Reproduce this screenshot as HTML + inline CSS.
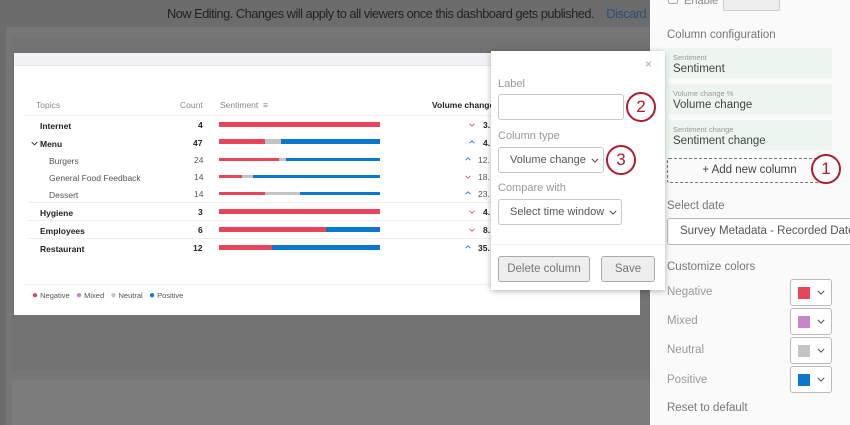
<!DOCTYPE html>
<html><head><style>
*{box-sizing:border-box;margin:0;padding:0}
body{width:850px;height:425px;overflow:hidden;background:#767676;font-family:"Liberation Sans",sans-serif;position:relative}
.abs{position:absolute}
.banner{left:6px;top:0;width:660px;height:27px;background:#6c6c6c;color:#222;font-size:12.8px;letter-spacing:-0.5px;line-height:27px;padding-left:161px;white-space:nowrap;overflow:hidden}
.banner span{color:#2d4f7a}
.card{left:14px;top:53px;width:626px;height:262px;background:#fff}
.card .hd{height:13px;background:#f2f2f6;border-bottom:1px solid #e6e6ea}
.th{font-size:8.5px;color:#888;top:100px}
.row{font-size:8.5px;color:#222}
.bar{height:5px;display:flex}
.bar.thin{height:3px}
.r{background:#e8455a}.g{background:#c4c4c4}.b{background:#0b78d0}
.pop{left:491px;top:51px;width:174px;height:239px;background:#fff;box-shadow:0 1px 6px rgba(0,0,0,.3)}
.lbl{font-size:11px;color:#999}
.inp{border:1px solid #c8c8c8;border-radius:3px;background:#fff;font-size:11.5px;color:#555;white-space:nowrap}
.btn{border:1px solid #aaa;border-radius:3px;background:#eee;font-size:11.5px;color:#777;text-align:center}
.circ{width:30px;height:30px;border:2.5px solid #b01c2e;border-radius:50%;background:#fff;color:#b01c2e;font-size:17px;text-align:center;line-height:25px}
.panel{left:650px;top:0;width:200px;height:425px;background:#fafafa}
.cc{left:668px;width:164px;height:30px;background:#edf6ee}
.cc .s{font-size:7.5px;color:#999;position:absolute;left:5px;top:5px}
.cc .m{font-size:11.5px;color:#444;position:absolute;left:5px;top:15px}
.sw{left:790px;width:42px;height:27px;border:1px solid #bbb;border-radius:3px;background:#fff}
.sw i{position:absolute;left:7px;top:7px;width:12px;height:12px}
.sw svg{position:absolute;left:26px;top:10px}
.ck{position:absolute}
</style></head><body>
<svg width="0" height="0" style="position:absolute">
<defs>
<symbol id="dn" viewBox="0 0 10 6"><path d="M1 1l4 4 4-4" fill="none" stroke="currentColor" stroke-width="1.3"/></symbol>
<symbol id="up" viewBox="0 0 10 6"><path d="M1 5l4-4 4 4" fill="none" stroke="currentColor" stroke-width="1.3"/></symbol>
</defs></svg>
<div class="abs" style="left:0;top:0;width:6px;height:425px;background:#6c6c6c"></div>
<div class="abs" style="left:12px;top:38px;width:640px;height:332px;background:#727272"></div>
<div class="abs" style="left:12px;top:380px;width:640px;height:45px;background:#7b7b7b"></div>
<div class="abs banner">Now Editing. Changes will apply to all viewers once this dashboard gets published. &nbsp;&nbsp;&nbsp;<span>Discard changes</span></div>

<div class="abs card"><div class="hd"></div></div>
<div class="abs th" style="left:36px">Topics</div>
<div class="abs th" style="left:180px">Count</div>
<div class="abs th" style="left:220px">Sentiment &nbsp;≡</div>
<div class="abs th" style="left:432px;color:#222;font-weight:bold">Volume change</div>
<div class="abs" style="left:24px;top:115px;width:468px;border-top:1px solid #eee"></div>

<div class="abs row" style="left:40px;top:121px;font-weight:bold">Internet</div>
<div class="abs row" style="left:198px;top:120px;font-weight:bold">4</div>
<div class="abs bar" style="left:219px;top:122px;width:161px"><div class="r" style="flex:1"></div></div>

<svg class="ck" style="left:31px;top:141px;color:#222" width="7" height="5"><use href="#dn"/></svg>
<div class="abs row" style="left:40px;top:139px;font-weight:bold">Menu</div>
<div class="abs row" style="left:193px;top:138px;font-weight:bold">47</div>
<div class="abs bar" style="left:219px;top:139px;width:161px"><div class="r" style="width:46px"></div><div class="g" style="width:16px"></div><div class="b" style="flex:1"></div></div>

<div class="abs row" style="left:49px;top:156px;color:#555">Burgers</div>
<div class="abs row" style="left:194px;top:155px;color:#555">24</div>
<div class="abs bar thin" style="left:219px;top:158px;width:161px"><div class="r" style="width:60px"></div><div class="g" style="width:7px"></div><div class="b" style="flex:1"></div></div>

<div class="abs row" style="left:49px;top:173px;color:#555">General Food Feedback</div>
<div class="abs row" style="left:194px;top:172px;color:#555">14</div>
<div class="abs bar thin" style="left:219px;top:175px;width:161px"><div class="r" style="width:23px"></div><div class="g" style="width:11px"></div><div class="b" style="flex:1"></div></div>

<div class="abs row" style="left:49px;top:190px;color:#555">Dessert</div>
<div class="abs row" style="left:194px;top:189px;color:#555">14</div>
<div class="abs bar thin" style="left:219px;top:192px;width:161px"><div class="r" style="width:46px"></div><div class="g" style="width:35px"></div><div class="b" style="flex:1"></div></div>

<div class="abs" style="left:28px;top:202px;width:464px;border-top:1px solid #eee"></div>
<div class="abs row" style="left:40px;top:208px;font-weight:bold">Hygiene</div>
<div class="abs row" style="left:198px;top:207px;font-weight:bold">3</div>
<div class="abs bar" style="left:219px;top:209px;width:161px"><div class="r" style="flex:1"></div></div>
<div class="abs" style="left:28px;top:220px;width:464px;border-top:1px solid #eee"></div>
<div class="abs row" style="left:40px;top:226px;font-weight:bold">Employees</div>
<div class="abs row" style="left:198px;top:225px;font-weight:bold">6</div>
<div class="abs bar" style="left:219px;top:227px;width:161px"><div class="r" style="width:107px"></div><div class="b" style="flex:1"></div></div>
<div class="abs" style="left:28px;top:238px;width:464px;border-top:1px solid #eee"></div>
<div class="abs row" style="left:40px;top:244px;font-weight:bold">Restaurant</div>
<div class="abs row" style="left:193px;top:243px;font-weight:bold">12</div>
<div class="abs bar" style="left:219px;top:245px;width:161px"><div class="r" style="width:53px"></div><div class="b" style="flex:1"></div></div>

<svg class="ck" style="left:469px;top:123px;color:#e8455a" width="6" height="4"><use href="#dn"/></svg><div class="abs row" style="left:483px;top:120px;font-weight:bold">3.</div>
<svg class="ck" style="left:469px;top:140px;color:#0b78d0" width="6" height="4"><use href="#up"/></svg><div class="abs row" style="left:483px;top:138px;font-weight:bold">4.</div>
<svg class="ck" style="left:465px;top:157px;color:#0b78d0" width="6" height="4"><use href="#up"/></svg><div class="abs row" style="left:478px;top:155px;color:#555">12.</div>
<svg class="ck" style="left:465px;top:175px;color:#e8455a" width="6" height="4"><use href="#dn"/></svg><div class="abs row" style="left:478px;top:172px;color:#555">18.</div>
<svg class="ck" style="left:465px;top:191px;color:#0b78d0" width="6" height="4"><use href="#up"/></svg><div class="abs row" style="left:478px;top:189px;color:#555">23.</div>
<svg class="ck" style="left:469px;top:210px;color:#e8455a" width="6" height="4"><use href="#dn"/></svg><div class="abs row" style="left:483px;top:207px;font-weight:bold">4.</div>
<svg class="ck" style="left:469px;top:228px;color:#e8455a" width="6" height="4"><use href="#dn"/></svg><div class="abs row" style="left:483px;top:225px;font-weight:bold">8.</div>
<svg class="ck" style="left:465px;top:245px;color:#0b78d0" width="6" height="4"><use href="#up"/></svg><div class="abs row" style="left:478px;top:243px;font-weight:bold">35.</div>

<div class="abs" style="left:24px;top:284px;width:467px;border-top:1px solid #eee"></div>
<div class="abs" style="left:32px;top:290px;font-size:7.5px;color:#555;white-space:nowrap">
<span style="color:#e8455a;font-size:10px">●</span> Negative &nbsp;&nbsp;<span style="color:#c886c8;font-size:10px">●</span> Mixed &nbsp;&nbsp;<span style="color:#c4c4c4;font-size:10px">●</span> Neutral &nbsp;&nbsp;<span style="color:#0b78d0;font-size:10px">●</span> Positive</div>

<div class="abs panel"></div>
<div class="abs" style="left:668px;top:-6px;width:10px;height:10px;border:1px solid #aaa;border-radius:2px"></div>
<div class="abs" style="left:684px;top:-5px;font-size:11px;color:#888">Enable</div>
<div class="abs" style="left:723px;top:-2px;width:57px;height:13px;background:#eee;border:1px solid #ccc;border-radius:2px"></div>
<div class="abs" style="left:667px;top:29px;font-size:11.5px;color:#777">Column configuration</div>
<div class="abs cc" style="top:48px"><span class="s">Sentiment</span><span class="m">Sentiment</span></div>
<div class="abs cc" style="top:84px"><span class="s">Volume change %</span><span class="m">Volume change</span></div>
<div class="abs cc" style="top:120px"><span class="s">Sentiment change</span><span class="m">Sentiment change</span></div>
<div class="abs" style="left:667px;top:158px;width:165px;height:25px;border:1px dashed #777;border-radius:2px;font-size:11.5px;color:#444;text-align:center;line-height:23px">+ Add new column</div>
<div class="abs" style="left:667px;top:200px;font-size:11.5px;color:#777">Select date</div>
<div class="abs inp" style="left:667px;top:218px;width:190px;height:27px;line-height:25px;padding-left:12px;border-color:#bbb">Survey Metadata - Recorded Date <svg width="9" height="6" style="margin-left:3px"><use href="#dn"/></svg></div>
<div class="abs" style="left:667px;top:261px;font-size:11.5px;color:#777">Customize colors</div>
<div class="abs" style="left:667px;top:286px;font-size:11.5px;color:#999">Negative</div>
<div class="abs" style="left:667px;top:315px;font-size:11.5px;color:#999">Mixed</div>
<div class="abs" style="left:667px;top:344px;font-size:11.5px;color:#999">Neutral</div>
<div class="abs" style="left:667px;top:374px;font-size:11.5px;color:#999">Positive</div>
<div class="abs" style="left:667px;top:402px;font-size:11.5px;color:#777">Reset to default</div>
<div class="abs sw" style="top:279px"><i style="background:#e8455a"></i><svg width="8" height="5" style="color:#555"><use href="#dn"/></svg></div>
<div class="abs sw" style="top:308px"><i style="background:#c886c8"></i><svg width="8" height="5" style="color:#555"><use href="#dn"/></svg></div>
<div class="abs sw" style="top:337px"><i style="background:#c4c4c4"></i><svg width="8" height="5" style="color:#555"><use href="#dn"/></svg></div>
<div class="abs sw" style="top:366px"><i style="background:#0b78d0"></i><svg width="8" height="5" style="color:#555"><use href="#dn"/></svg></div>

<div class="abs pop"></div>
<div class="abs" style="left:645px;top:57px;font-size:12px;color:#aaa">×</div>
<div class="abs lbl" style="left:498px;top:78px">Label</div>
<div class="abs inp" style="left:498px;top:94px;width:126px;height:26px"></div>
<div class="abs lbl" style="left:498px;top:130px">Column type</div>
<div class="abs inp" style="left:498px;top:147px;width:106px;height:26px;line-height:24px;padding-left:11px;font-size:11px">Volume change <svg width="8" height="5" style="margin-left:2px;vertical-align:middle"><use href="#dn"/></svg></div>
<div class="abs lbl" style="left:498px;top:182px">Compare with</div>
<div class="abs inp" style="left:498px;top:199px;width:124px;height:26px;line-height:24px;padding-left:11px;font-size:11px">Select time window <svg width="8" height="5" style="margin-left:2px;vertical-align:middle"><use href="#dn"/></svg></div>
<div class="abs" style="left:491px;top:244px;width:174px;border-top:1px solid #eee"></div>
<div class="abs btn" style="left:498px;top:256px;width:92px;height:26px;line-height:24px">Delete column</div>
<div class="abs btn" style="left:601px;top:256px;width:54px;height:26px;line-height:24px">Save</div>

<div class="abs circ" style="left:626px;top:92px">2</div>
<div class="abs circ" style="left:606px;top:145px">3</div>
<div class="abs circ" style="left:811px;top:154px">1</div>
</body></html>
